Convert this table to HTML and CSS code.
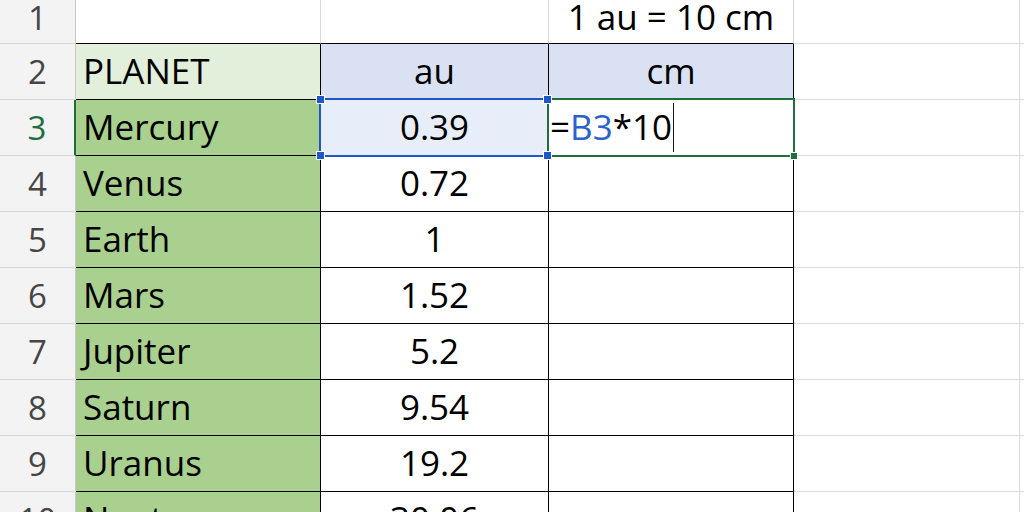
FILE: index.html
```html
<!DOCTYPE html>
<html lang="en">
<head>
<meta charset="utf-8">
<title>Planets</title>
<link rel="stylesheet" href="styles.css">
</head>
<body>
<div class="sheet">
  <div class="cell rh first">1</div>
  <div class="cell top first"></div>
  <div class="cell top first"></div>
  <div class="cell top center first">1 au = 10 cm</div>
  <div class="cell first"></div>
  <div class="cell first"></div>

  <div class="cell rh">2</div>
  <div class="cell t planet-h">PLANET</div>
  <div class="cell t head center">au</div>
  <div class="cell t head center">cm</div>
  <div class="cell"></div>
  <div class="cell"></div>

  <div class="cell rh active">3</div>
  <div class="cell t planet">Mercury</div>
  <div class="cell t center ref">0.39
    <span class="range"><span class="h tl"></span><span class="h tr"></span><span class="h bl"></span><span class="h br"></span></span>
  </div>
  <div class="cell t edit"><span class="formula">=<span class="refb">B3</span>*10</span><span class="caret"></span>
    <span class="active-box"><span class="fill"></span></span>
  </div>
  <div class="cell"></div>
  <div class="cell"></div>

  <div class="cell rh">4</div>
  <div class="cell t planet">Venus</div>
  <div class="cell t center">0.72</div>
  <div class="cell t"></div>
  <div class="cell"></div>
  <div class="cell"></div>

  <div class="cell rh">5</div>
  <div class="cell t planet">Earth</div>
  <div class="cell t center">1</div>
  <div class="cell t"></div>
  <div class="cell"></div>
  <div class="cell"></div>

  <div class="cell rh">6</div>
  <div class="cell t planet">Mars</div>
  <div class="cell t center">1.52</div>
  <div class="cell t"></div>
  <div class="cell"></div>
  <div class="cell"></div>

  <div class="cell rh">7</div>
  <div class="cell t planet">Jupiter</div>
  <div class="cell t center">5.2</div>
  <div class="cell t"></div>
  <div class="cell"></div>
  <div class="cell"></div>

  <div class="cell rh">8</div>
  <div class="cell t planet">Saturn</div>
  <div class="cell t center">9.54</div>
  <div class="cell t"></div>
  <div class="cell"></div>
  <div class="cell"></div>

  <div class="cell rh">9</div>
  <div class="cell t planet">Uranus</div>
  <div class="cell t center">19.2</div>
  <div class="cell t"></div>
  <div class="cell"></div>
  <div class="cell"></div>

  <div class="cell rh">10</div>
  <div class="cell t planet">Neptune</div>
  <div class="cell t center">30.06</div>
  <div class="cell t"></div>
  <div class="cell"></div>
  <div class="cell"></div>
</div>
</body>
</html>
```
FILE: styles.css
```css
html, body {
  margin: 0;
  padding: 0;
  background: #ffffff;
  overflow: hidden;
}

body {
  font-family: "Open Sans", Lato, "Liberation Sans", sans-serif;
}

.sheet {
  display: grid;
  grid-template-columns: 76px 245px 228px 245px 226px 1fr;
  grid-template-rows: 44px repeat(9, 56px);
  width: 1024px;
  height: 512px;
  overflow: hidden;
}

.cell {
  box-sizing: border-box;
  border-right: 1px solid #dadada;
  border-bottom: 1px solid #dadada;
  display: flex;
  align-items: flex-end;
  padding: 0 0 11px 7px;
  font-size: 35px;
  font-weight: 500;
  line-height: 1;
  color: #000;
  white-space: nowrap;
}

.cell.first {
  padding-bottom: 9px;
}

.rh {
  background: #f3f3f3;
  border-right-color: #c9c9c9;
  border-bottom-color: #d6d6d6;
  justify-content: center;
  padding-left: 0;
  color: #454545;
  font-size: 33px;
  font-weight: 400;
}

.rh.active {
  color: #1f6f3c;
  border-right: 2px solid #1f6f3c;
}

.center {
  justify-content: center;
  padding-left: 0;
}

.top {
  border-bottom-color: #000;
}

.t {
  border-right-color: #000;
  border-bottom-color: #000;
}

.planet-h {
  background: #e2efda;
}

.head {
  background: #d9e1f2;
}

.planet {
  background: #a9d08e;
}

.ref {
  position: relative;
  background: #e8eef9;
}

.edit {
  position: relative;
  padding-left: 1px;
}

.refb {
  color: #2a63c9;
}

.caret {
  display: inline-block;
  width: 1px;
  height: 49px;
  background: #111;
  margin: 0 0 -8px 1px;
}

.range {
  position: absolute;
  left: -2px;
  top: -2px;
  width: 230px;
  height: 59px;
  box-sizing: border-box;
  border: 2px solid #2057c8;
}

.h {
  position: absolute;
  width: 7px;
  height: 7px;
  background: #2057c8;
  border: 1px solid #fff;
  z-index: 2;
}

.tl { left: -5px; top: -5px; }
.tr { right: -5px; top: -5px; }
.bl { left: -5px; bottom: -5px; }
.br { right: -5px; bottom: -5px; }

.active-box {
  position: absolute;
  left: -2px;
  top: -2px;
  width: 248px;
  height: 59px;
  box-sizing: border-box;
  border: 2px solid #1f6f3c;
  z-index: 1;
}

.fill {
  position: absolute;
  right: -5px;
  bottom: -5px;
  width: 6px;
  height: 6px;
  background: #1f6f3c;
  border: 1px solid #fff;
}
```
